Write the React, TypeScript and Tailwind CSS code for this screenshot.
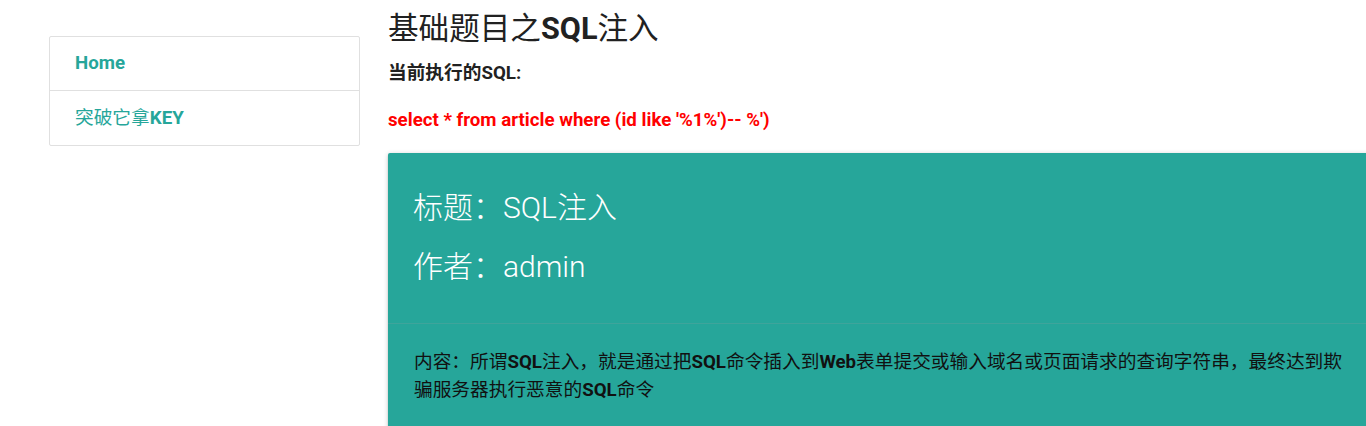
export default function App() {
  const font = { fontFamily: 'Roboto, "Noto Sans CJK SC", sans-serif' };
  return (
    <div className="w-full min-h-[426px] bg-white overflow-hidden text-[#212121]" style={font}>
      <div className="flex items-start pl-[49px] gap-[28px]">
        {/* Sidebar */}
        <div className="w-[311px] flex-shrink-0 mt-[36px] border border-[#e0e0e0] rounded-[2px]">
          <div className="h-[54px] flex items-center px-[25px] border-b border-[#e0e0e0] text-[18.7px] font-bold text-[#26a69a]">
            Home
          </div>
          <div className="h-[54px] flex items-center px-[25px] text-[18.7px] text-[#26a69a]">
            突破它拿<b className="font-bold">KEY</b>
          </div>
        </div>

        {/* Main */}
        <div className="flex-shrink-0 w-[990px]">
          <h1 className="pt-[9px] leading-[40px] text-[30.6px] font-normal">
            基础题目之<b className="font-bold">SQL</b>注入
          </h1>
          <p className="mt-[10px] leading-[28px] text-[18.7px] font-bold">当前执行的SQL:</p>
          <p className="mt-[19px] leading-[28px] text-[18.7px] font-bold text-[#ff0000]">
            select * from article where (id like '%1%')-- %')
          </p>

          <div className="mt-[19px] bg-[#26a69a] rounded-[2px] shadow-[0_2px_2px_0_rgba(0,0,0,0.14),0_3px_1px_-2px_rgba(0,0,0,0.12),0_1px_5px_0_rgba(0,0,0,0.2)]">
            <div className="px-[25px] pt-[35px] pb-[36px] flex flex-col gap-[19px] text-white font-light text-[30px] leading-[40px]">
              <p>标题：SQL注入</p>
              <p>作者：admin</p>
            </div>
            <div className="border-t border-[rgba(160,160,160,0.2)] px-[26px] pt-[24px] pb-[40px] text-[18.7px] leading-[28px] text-[#111]">
              内容：所谓<b className="font-bold">SQL</b>注入，就是通过把<b className="font-bold">SQL</b>命令插入到<b className="font-bold">Web</b>表单提交或输入域名或页面请求的查询字符串，最终达到欺骗服务器执行恶意的<b className="font-bold">SQL</b>命令
            </div>
          </div>
        </div>
      </div>
    </div>
  );
}
